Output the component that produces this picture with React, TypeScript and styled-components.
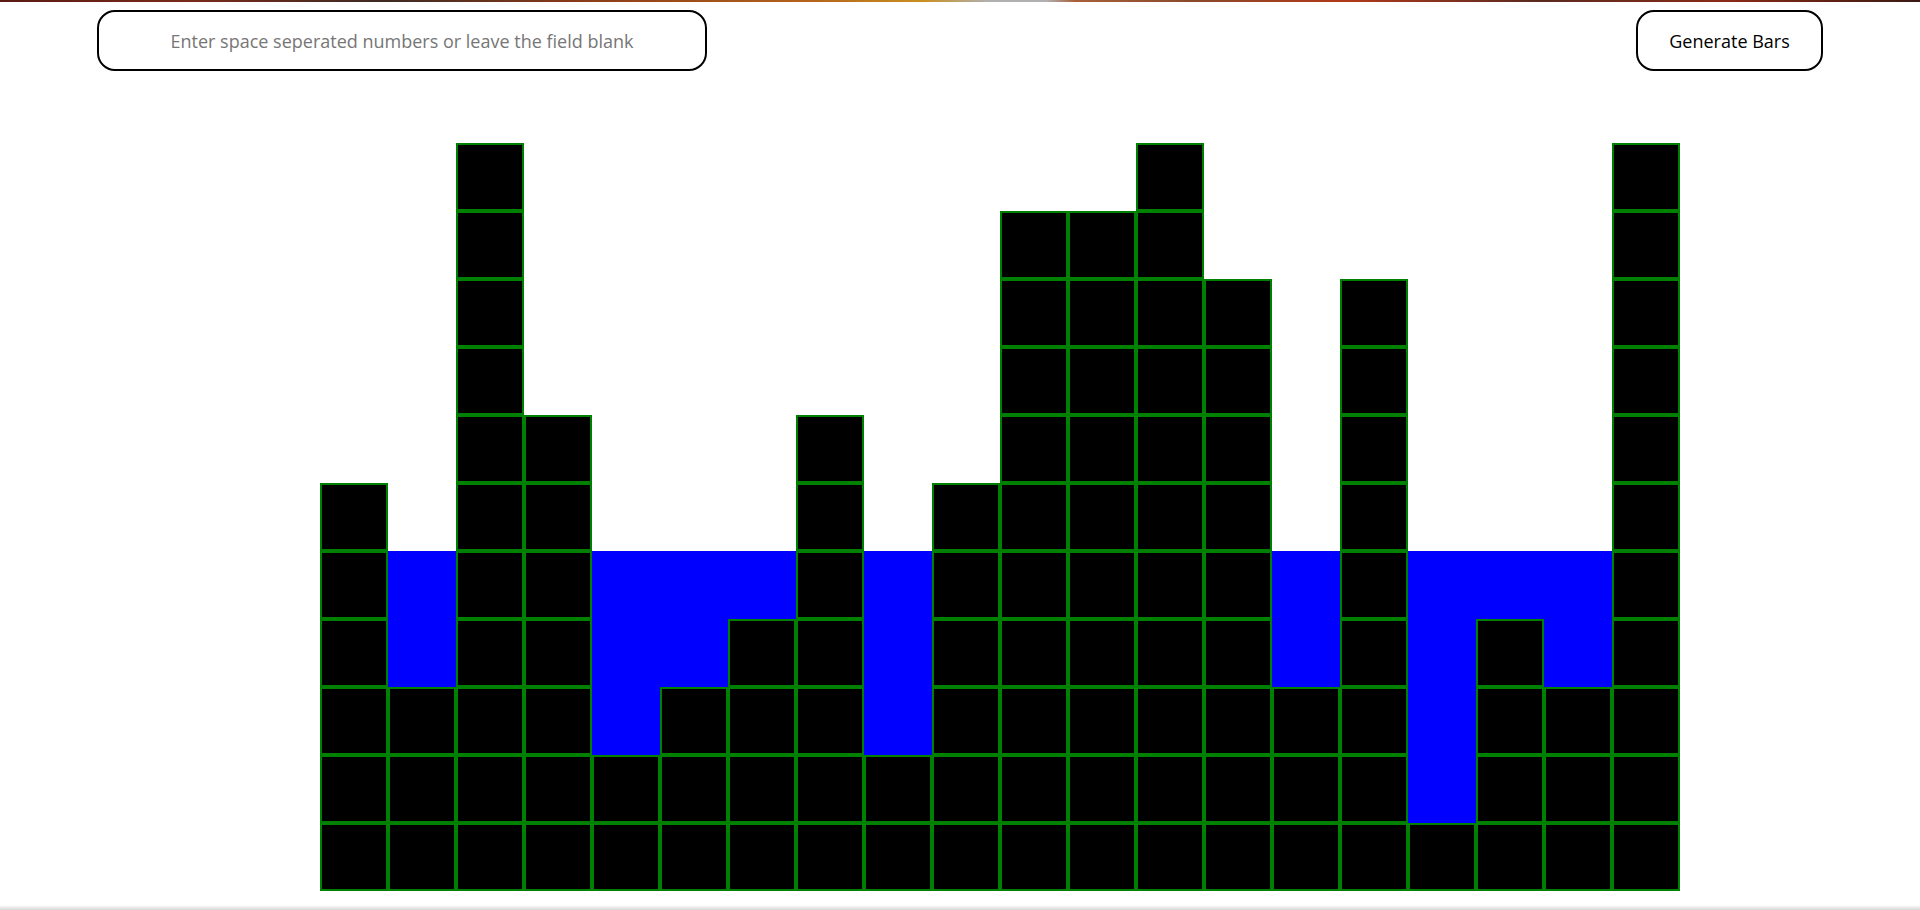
import React from 'react';
import styled, { createGlobalStyle } from 'styled-components';

const GlobalStyle = createGlobalStyle`
  html, body {
    margin: 0;
    padding: 0;
    background: #ffffff;
    font-family: 'Open Sans', 'Noto Sans', sans-serif;
    overflow: hidden;
  }
`;

const Page = styled.div`
  display: flex;
  flex-direction: column;
  height: 100vh;
`;

const TopStrip = styled.div`
  height: 2px;
  background: linear-gradient(
    90deg,
    #5a1a12 0%,
    #7a2a1a 10%,
    #3d2a22 20%,
    #8a3a18 30%,
    #b4621c 42%,
    #c8901e 48%,
    #b0b0b0 51.5%,
    #b0b0b0 54.5%,
    #a8603a 56%,
    #8a4a2a 62%,
    #b23a1a 70%,
    #5a2a20 80%,
    #8a2a14 90%,
    #3a1a14 100%
  );
`;

const Header = styled.div`
  display: flex;
  justify-content: space-between;
  align-items: center;
  padding: 8px 97px 0 97px;
`;

const NumbersInput = styled.input`
  box-sizing: border-box;
  width: 610px;
  height: 61px;
  border: 2px solid #000;
  border-radius: 18px;
  font-family: 'Open Sans', 'Noto Sans', sans-serif;
  font-size: 18px;
  text-align: center;
  outline: none;
  background: #fff;

  &::placeholder {
    color: #767676;
  }
`;

const GenerateButton = styled.button`
  box-sizing: border-box;
  width: 187px;
  height: 61px;
  border: 2px solid #000;
  border-radius: 18px;
  background: #fff;
  color: #000;
  font-family: 'Open Sans', 'Noto Sans', sans-serif;
  font-size: 18px;
  cursor: pointer;
`;

const BarsArea = styled.div`
  display: flex;
  align-items: flex-end;
  height: 748px;
  margin-top: 72px;
  padding-left: 320px;
`;

const Column = styled.div`
  display: flex;
  flex-direction: column;
`;

const Cell = styled.div<{ $water?: boolean }>`
  box-sizing: border-box;
  width: 68px;
  height: 68px;
  background: ${(p) => (p.$water ? '#0000ff' : '#000000')};
  border: ${(p) => (p.$water ? 'none' : '2px solid #008000')};
`;

const BottomShade = styled.div`
  margin-top: auto;
  height: 5px;
  background: linear-gradient(180deg, #ffffff 0%, #e6e6e6 60%, #d8d8d8 100%);
`;

const heights = [6, 3, 11, 7, 2, 3, 4, 7, 2, 6, 10, 10, 11, 9, 3, 9, 1, 4, 3, 11];
const waterLevel = 5;

const App = () => (
  <Page>
    <GlobalStyle />
    <TopStrip />
    <Header>
      <NumbersInput placeholder="Enter space seperated numbers or leave the field blank" />
      <GenerateButton>Generate Bars</GenerateButton>
    </Header>
    <BarsArea>
      {heights.map((h, i) => {
        const water = Math.max(0, waterLevel - h);
        return (
          <Column key={i}>
            {Array.from({ length: water }).map((_, j) => (
              <Cell key={`w${j}`} $water />
            ))}
            {Array.from({ length: h }).map((_, j) => (
              <Cell key={`b${j}`} />
            ))}
          </Column>
        );
      })}
    </BarsArea>
    <BottomShade />
  </Page>
);

export default App;
